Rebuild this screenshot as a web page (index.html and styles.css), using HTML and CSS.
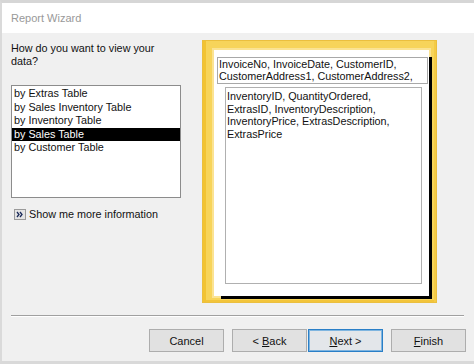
FILE: index.html
```html
<!DOCTYPE html>
<html>
<head>
<meta charset="utf-8">
<link rel="stylesheet" href="styles.css">
</head>
<body>
<div class="window">
  <div class="titlebar">Report Wizard</div>
  <div class="main">
    <div class="left">
      <p class="question">How do you want to view your<br>data?</p>
      <ul class="list">
        <li>by Extras Table</li>
        <li>by Sales Inventory Table</li>
        <li>by Inventory Table</li>
        <li class="selected">by Sales Table</li>
        <li>by Customer Table</li>
      </ul>
      <div class="more">
        <span class="more-icon"><svg width="10" height="9" viewBox="0 0 10 9"><polyline points="2,2 4,4.5 2,7" fill="none" stroke="#1a2a5a" stroke-width="1.3"/><polyline points="5,2 7,4.5 5,7" fill="none" stroke="#1a2a5a" stroke-width="1.3"/></svg></span>
        <span>Show me more information</span>
      </div>
    </div>
    <div class="frame">
      <div class="page">
        <div class="box1">InvoiceNo, InvoiceDate, CustomerID,<br>CustomerAddress1, CustomerAddress2,</div>
        <div class="box2">InventoryID, QuantityOrdered,<br>ExtrasID, InventoryDescription,<br>InventoryPrice, ExtrasDescription,<br>ExtrasPrice</div>
      </div>
    </div>
  </div>
  <div class="sep"></div>
  <div class="buttons">
    <button class="btn">Cancel</button>
    <button class="btn btn-back">&lt; <u>B</u>ack</button>
    <button class="btn btn-next"><u>N</u>ext &gt;</button>
    <button class="btn btn-finish"><u>F</u>inish</button>
  </div>
</div>
</body>
</html>
```
FILE: styles.css
```css
* { box-sizing: border-box; }
html, body { margin: 0; padding: 0; background: #f0f0f0; }
body { font-family: "Liberation Sans", Arial, sans-serif; font-size: 10.8px; color: #111; }

.window {
  width: 474px;
  height: 364px;
  background: #f0f0f0;
  border-top: 3px solid #d6d6d6;
  border-left: 2px solid #dadada;
  border-bottom: 3px solid #d9d9d9;
  display: flex;
  flex-direction: column;
  overflow: hidden;
}

.titlebar {
  height: 30px;
  line-height: 30px;
  background: #fff;
  color: #999;
  padding-left: 9px;
  font-size: 11px;
}

.main {
  display: flex;
  align-items: flex-start;
  padding: 7px 0 0 9px;
}

.left { width: 170px; margin-right: 21px; }

.question { margin: 2px 0 0 0; line-height: 13px; }

.list {
  list-style: none;
  margin: 17px 0 0 0;
  padding: 1px 0 0 0;
  height: 113px;
  border: 1px solid #8c8c8c;
  background: #fff;
}
.list li { height: 13.6px; line-height: 13.6px; padding-left: 2px; white-space: nowrap; }
.list li.selected { background: #000; color: #fff; }

.more { display: flex; align-items: center; margin-top: 9px; height: 14px; padding-left: 4px; gap: 4px; }
.more-icon {
  width: 10px; height: 9px;
  background: #e4e4e4;
  outline: 1px solid #9a9a9a;
  display: flex;
}

.frame {
  width: 235px;
  height: 263px;
  padding: 9px 9px 8px 11px;
  background: #f7d45a;
  border: 1px solid #ebbf3e;
  box-shadow: inset 3px 0 0 #f2c333, inset -2px 0 0 #f4cb46, inset 0 -2px 0 #f2c43a;
}

.page {
  width: 215px;
  height: 246px;
  background: #fff;
  box-shadow: 5px 5px 0 -2px #000, 0 0 0 2px #fbe393;
  display: flex;
  flex-direction: column;
}

.box1 {
  margin: 7px 1px 0 3px;
  border: 1px solid #a8a8a8;
  line-height: 12px;
  padding: 0 0 1px 1px;
  height: 27px;
  white-space: nowrap;
}

.box2 {
  margin: 3px 0 0 11px;
  width: 197px;
  height: 197px;
  border: 1px solid #b0b0b0;
  line-height: 12.5px;
  padding: 2px 0 0 1px;
  white-space: nowrap;
}

.sep {
  margin: 12px 10px 0 9px;
  height: 2px;
  border-top: 1px solid #a0a0a0;
  border-bottom: 1px solid #fff;
}

.buttons {
  display: flex;
  justify-content: flex-end;
  padding-right: 8px;
  margin-top: 12px;
}

.btn {
  width: 75px;
  height: 23px;
  background: #e1e1e1;
  border: 1px solid #adadad;
  font-family: "Liberation Sans", Arial, sans-serif;
  font-size: 11px;
  color: #111;
  padding: 0;
  margin: 0 0 0 8px;
}
.btn-next {
  margin-left: 1px;
  border: 1px solid #2a7fc7;
  box-shadow: inset 0 0 0 1px #7fb5e0;
  background: #e3e6ea;
}
```
